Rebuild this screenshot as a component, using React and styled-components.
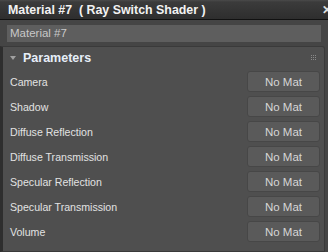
import React from 'react'
import styled, { createGlobalStyle } from 'styled-components'

const GlobalStyle = createGlobalStyle`
    html, body {
        margin: 0;
        padding: 0;
        background: #444444;
    }
    body {
        font-family: Tahoma, "Liberation Sans", "DejaVu Sans", sans-serif;
    }
`;

const Window = styled.div`
    width: 328px;
    height: 252px;
    overflow: hidden;
    background: #454545;
    display: flex;
    flex-direction: column;
`;

const TitleBar = styled.div`
    height: 19px;
    display: flex;
    align-items: center;
    justify-content: space-between;
    padding: 0 0 0 8px;
    background: linear-gradient(#4a4a4a 0, #3b3b3b 2px, #2e2e2e 100%);
    border-bottom: 1px solid #111;
    color: #f2f2f2;
    font-family: "Liberation Sans", Arial, sans-serif;
    font-weight: bold;
    font-size: 12.4px;
    white-space: pre;
`;

const Close = styled.span`
    margin-right: -4px;
    font-size: 12px;
    color: #ddd;
`;

const NameRow = styled.div`
    padding: 5px 7px 4px 7px;
`;

const NameInput = styled.div`
    height: 17px;
    line-height: 17px;
    padding: 0 3px;
    background: #5e5e5e;
    color: #c8c8c8;
    font-family: "Liberation Sans", Arial, sans-serif;
    font-size: 11.5px;
`;

const Panel = styled.section`
    margin: 0 3px 0 0;
    flex: 1;
    background: #4f4f4f;
    border: 1px solid #3a3a3a;
    border-left: 3px solid #2e2e2e;
    border-radius: 0 3px 0 0;
    padding: 0 4px 4px 6px;
    display: flex;
    flex-direction: column;
`;

const PanelHeader = styled.div`
    height: 22px;
    display: flex;
    align-items: center;
    gap: 7px;
    padding-left: 1px;
    position: relative;
`;

const Triangle = styled.span`
    width: 0;
    height: 0;
    border-left: 3px solid transparent;
    border-right: 3px solid transparent;
    border-top: 4px solid #a0a0a0;
`;

const HeaderTitle = styled.span`
    color: #e6eef8;
    font-family: "Liberation Sans", Arial, sans-serif;
    font-weight: bold;
    font-size: 12.5px;
`;

const Grip = styled.span`
    position: absolute;
    right: 4px;
    top: 8px;
    display: grid;
    grid-template-columns: repeat(3, 1px);
    gap: 1px;
    span {
        width: 1px;
        height: 1px;
        background: #8a8a8a;
    }
`;

const Row = styled.div`
    height: 25px;
    display: flex;
    align-items: center;
    justify-content: space-between;
`;

const Label = styled.span`
    padding-left: 1px;
    color: #e2e2e2;
    font-family: "Liberation Sans", Arial, sans-serif;
    font-size: 10.6px;
`;

const MatButton = styled.button`
    width: 73px;
    height: 21px;
    margin: 0;
    padding: 0;
    background: #5a5a5a;
    border: 1px solid #474747;
    border-radius: 3px;
    color: #d6d6d6;
    font-family: "Liberation Sans", Arial, sans-serif;
    font-size: 11.5px;
`;

const slots = [
    'Camera',
    'Shadow',
    'Diffuse Reflection',
    'Diffuse Transmission',
    'Specular Reflection',
    'Specular Transmission',
    'Volume',
];

const App = () => {
    return (
        <>
            <GlobalStyle />
            <Window>
                <TitleBar>
                    <span>Material #7  ( Ray Switch Shader )</span>
                    <Close>✕</Close>
                </TitleBar>
                <NameRow>
                    <NameInput>Material #7</NameInput>
                </NameRow>
                <Panel>
                    <PanelHeader>
                        <Triangle />
                        <HeaderTitle>Parameters</HeaderTitle>
                        <Grip>
                            {Array.from({ length: 9 }).map((_, i) => <span key={i} />)}
                        </Grip>
                    </PanelHeader>
                    {slots.map((name) => (
                        <Row key={name}>
                            <Label>{name}</Label>
                            <MatButton>No Mat</MatButton>
                        </Row>
                    ))}
                </Panel>
            </Window>
        </>
    )
}

export default App
